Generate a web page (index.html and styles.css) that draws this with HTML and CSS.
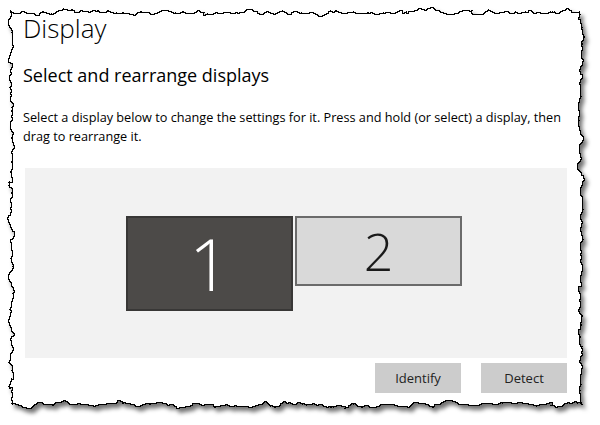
FILE: index.html
```html
<!DOCTYPE html>
<html lang="en">
<head>
<meta charset="utf-8">
<title>Display</title>
<link rel="stylesheet" href="styles.css">
</head>
<body>
<svg class="torn" width="600" height="425" viewBox="0 0 600 425" aria-hidden="true">
  <defs>
    <filter id="tornEdge" filterUnits="userSpaceOnUse" x="0" y="0" width="600" height="425">
      <feTurbulence type="fractalNoise" baseFrequency="0.07" numOctaves="4" seed="11" result="noise"/>
      <feDisplacementMap in="SourceGraphic" in2="noise" scale="13" xChannelSelector="R" yChannelSelector="G" result="shape"/>
      <feMorphology in="shape" operator="erode" radius="1" result="inner"/>
      <feComposite in="shape" in2="inner" operator="out" result="line"/>
      <feFlood flood-color="#ffffff" result="white"/>
      <feComposite in="white" in2="inner" operator="in" result="fill"/>
      <feGaussianBlur in="shape" stdDeviation="2.2" result="blur"/>
      <feOffset in="blur" dx="3" dy="4" result="off"/>
      <feColorMatrix in="off" type="matrix" values="0 0 0 0 0  0 0 0 0 0  0 0 0 0 0  0 0 0 0.55 0" result="shadow"/>
      <feMerge>
        <feMergeNode in="shadow"/>
        <feMergeNode in="fill"/>
        <feMergeNode in="line"/>
      </feMerge>
    </filter>
  </defs>
  <rect x="11" y="12" width="571" height="393" fill="#000" filter="url(#tornEdge)"/>
</svg>
<main class="panel">
  <h1 class="title">Display</h1>
  <h2 class="subtitle">Select and rearrange displays</h2>
  <p class="desc">Select a display below to change the settings for it. Press and hold (or select) a display, then drag to rearrange it.</p>
  <div class="arrange">
    <div class="monitor monitor-primary">1</div>
    <div class="monitor monitor-secondary">2</div>
  </div>
  <div class="actions">
    <button class="btn" type="button">Identify</button>
    <button class="btn" type="button">Detect</button>
  </div>
</main>
</body>
</html>
```
FILE: styles.css
```css
html, body {
  margin: 0;
  padding: 0;
  background: #ffffff;
}
body {
  width: 600px;
  height: 425px;
  overflow: hidden;
  position: relative;
  font-family: "Open Sans", "Noto Sans", sans-serif;
  color: #000;
}
.torn {
  position: absolute;
  left: 0;
  top: 0;
  z-index: 0;
}
.panel {
  position: relative;
  z-index: 1;
  width: 542px;
  margin-left: 25px;
  padding-top: 12px;
}
.title {
  margin: 0 0 0 -2px;
  font-size: 26px;
  font-weight: 300;
  line-height: 32px;
}
.subtitle {
  margin: 18px 0 0 -2px;
  font-size: 18px;
  font-weight: 400;
  line-height: 26px;
}
.desc {
  margin: 20px 0 0 -2px;
  font-size: 12.7px;
  line-height: 19px;
}
.arrange {
  box-sizing: border-box;
  margin-top: 22px;
  height: 190px;
  padding-right: 4px;
  background: #f2f2f2;
  display: flex;
  justify-content: center;
  align-items: center;
  gap: 2px;
}
.monitor {
  box-sizing: border-box;
  width: 167px;
  display: flex;
  align-items: center;
  justify-content: center;
  font-weight: 300;
}
.monitor-primary {
  height: 95px;
  background: #4c4a48;
  border: 2px solid #383736;
  color: #fff;
  font-size: 72px;
}
.monitor-secondary {
  height: 70px;
  background: #d9d9d9;
  border: 2px solid #6b6b6b;
  color: #1a1a1a;
  font-size: 52px;
  margin-bottom: 25px;
}
.actions {
  display: flex;
  justify-content: flex-end;
  gap: 20px;
  margin-top: 5px;
}
.btn {
  width: 86px;
  height: 30px;
  border: 0;
  background: #cccccc;
  color: #222;
  font-family: inherit;
  font-size: 13px;
  padding: 0;
}
```
